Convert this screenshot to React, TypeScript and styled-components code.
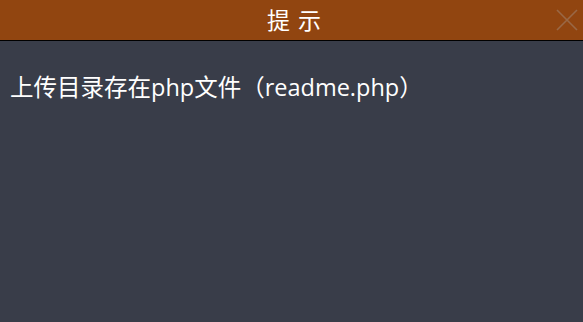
import React from "react";
import styled, { createGlobalStyle } from "styled-components";

const Global = createGlobalStyle`
  html, body { margin: 0; padding: 0; }
  body { background: #393d49; font-family: "Open Sans", "Noto Sans CJK SC", sans-serif; }
`;

const Dialog = styled.div`
  width: 583px;
  height: 322px;
  background: #393d49;
  display: flex;
  flex-direction: column;
`;

const Header = styled.div`
  height: 40px;
  background: #914510;
  border-bottom: 1px solid #000;
  position: relative;
  display: flex;
  align-items: center;
  justify-content: center;
`;

const Title = styled.div`
  color: #fff;
  font-size: 23px;
  line-height: 23px;
  letter-spacing: 8px;
  padding-left: 13px;
  margin-top: -2px;
  font-family: "Noto Sans CJK SC", sans-serif;
`;

const Close = styled.button`
  position: absolute;
  right: 4px;
  top: 8px;
  width: 24px;
  height: 24px;
  padding: 0;
  border: 0;
  background: none;
  opacity: 0.35;
`;

const Content = styled.div`
  padding: 32px 10px;
  color: #fff;
  font-size: 23.5px;
  line-height: 28px;
  font-family: "Open Sans", "Noto Sans CJK SC", sans-serif;
`;

export default function App() {
  return (
    <>
      <Global />
      <Dialog>
        <Header>
          <Title>提示</Title>
          <Close aria-label="close">
            <svg width="24" height="24" viewBox="0 0 24 24">
              <path d="M2 2L22 22M22 2L2 22" stroke="#aaa" strokeWidth="1.6" />
            </svg>
          </Close>
        </Header>
        <Content>上传目录存在php文件（readme.php）</Content>
      </Dialog>
    </>
  );
}
